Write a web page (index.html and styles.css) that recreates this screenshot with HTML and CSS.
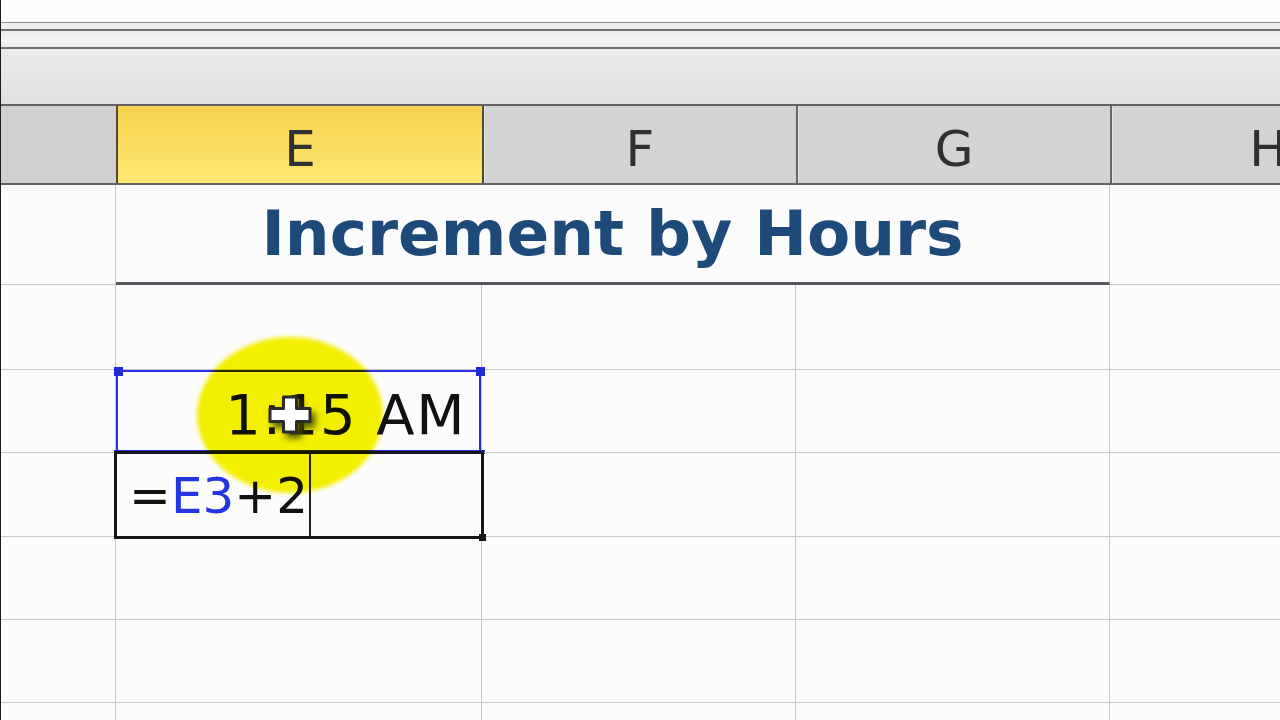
FILE: index.html
```html
<!DOCTYPE html>
<html lang="en">
<head>
  <meta charset="UTF-8">
  <title>Increment by Hours</title>
  <link rel="stylesheet" href="styles.css">
</head>
<body>

<div class="window">
  <!-- what is left of the ribbon above the sheet -->
  <div class="ribbon">
    <div class="ribbon-gap"></div>
    <div class="ribbon-line thin"></div>
    <div class="ribbon-strip"></div>
    <div class="ribbon-line"></div>
    <div class="ribbon-strip tall"></div>
    <div class="ribbon-line"></div>
    <div class="ribbon-base"></div>
  </div>

  <div class="col-heads">
    <div class="col-head corner"></div>
    <div class="col-head current">E</div>
    <div class="col-head">F</div>
    <div class="col-head">G</div>
    <div class="col-head">H</div>
  </div>

  <div class="sheet">
    <div class="cell"></div>
    <div class="cell title">Increment by Hours</div>
    <div class="cell"></div>

    <div class="cell"></div><div class="cell"></div><div class="cell"></div><div class="cell"></div><div class="cell"></div>

    <div class="cell"></div>
    <div class="cell value sel">
      1:15 AM
      <span class="handle tl"></span>
      <span class="handle tr"></span>
      <span class="handle bl"></span>
      <span class="handle br"></span>
    </div>
    <div class="cell"></div><div class="cell"></div><div class="cell"></div>

    <div class="cell"></div>
    <div class="cell formula active">
      <span class="formula-text">=<span class="ref">E3</span>+2</span>
      <span class="caret"></span>
      <span class="fill-handle"></span>
    </div>
    <div class="cell"></div><div class="cell"></div><div class="cell"></div>

    <div class="cell"></div><div class="cell"></div><div class="cell"></div><div class="cell"></div><div class="cell"></div>
    <div class="cell"></div><div class="cell"></div><div class="cell"></div><div class="cell"></div><div class="cell"></div>
    <div class="cell"></div><div class="cell"></div><div class="cell"></div><div class="cell"></div><div class="cell"></div>

    <!-- screen recorder click highlight + mouse pointer -->
    <div class="spotlight"></div>
    <svg class="pointer" width="56" height="52" viewBox="0 0 56 52">
      <path d="M19.5 7 H32.5 V18.5 H46 V31.5 H32.5 V42 H19.5 V31.5 H6 V18.5 H19.5 Z" fill="#fff" stroke="#2b2b2b" stroke-width="3" stroke-linejoin="round"/>
    </svg>
  </div>
</div>

</body>
</html>
```

FILE: styles.css
```css
body {
  margin: 0;
  background: #fcfcfc;
  font-family: "DejaVu Sans", Verdana, sans-serif;
  overflow: hidden;
}
.window {
  position: relative;
  width: 1280px;
  height: 720px;
  overflow: hidden;
  background: #fcfcfc;
}
.window::after {
  content: "";
  position: absolute;
  top: 0; bottom: 0; left: 0;
  width: 1px;
  background: #1c1c1c;
}

/* ribbon remains */
.ribbon-gap {
  height: 22px;
  background: #fdfdfd;
}
.ribbon-line {
  height: 2px;
  background: #727272;
}
.ribbon-line.thin {
  height: 1px;
  background: #8e8e8e;
}
.ribbon-strip {
  height: 6px;
  background: #efefef;
}
.ribbon-strip.tall {
  height: 16px;
  background: linear-gradient(#ececec, #f2f2f2 60%, #e9e9e9);
}
.ribbon-base {
  height: 55px;
  background: linear-gradient(#ebebeb, #e0e0e0);
}

/* column headers */
.col-heads {
  display: grid;
  grid-template-columns: 116px 366px 314px 314px 314px;
  height: 81px;
  border-top: 2px solid #626262;
  border-bottom: 2px solid #626262;
  box-sizing: border-box;
  width: 1424px;
}
.col-head {
  display: flex;
  align-items: center;
  justify-content: center;
  padding-top: 8px;
  box-sizing: border-box;
  font-size: 50px;
  color: #303030;
  background: #d3d3d3;
  border-left: 2px solid #666;
  box-shadow: inset 1px 0 #e4e4e4;
}
.col-head.corner {
  border-left: none;
  box-shadow: none;
  background: #d0d0d0;
}
.col-head.current {
  background: linear-gradient(#f9d250, #fde872);
  border-left: 2px solid #4e4b38;
  border-right: 2px solid #4e4b38;
  box-shadow: none;
  margin-right: -2px;
  position: relative;
  z-index: 1;
}

/* grid body */
.sheet {
  position: relative;
  display: grid;
  grid-template-columns: 116px 366px 314px 314px 314px;
  grid-template-rows: 100px 85px 83px 84px 83px 83px 83px;
  width: 1424px;
}
.cell {
  border-right: 1px solid #c8c8c8;
  border-bottom: 1px solid #c8c8c8;
  box-sizing: border-box;
  position: relative;
}
.cell.title {
  grid-column: span 3;
  border-bottom: 3px solid #55585e;
  display: flex;
  align-items: center;
  justify-content: center;
  font-weight: bold;
  font-size: 63px;
  color: #1e4a7a;
}
.cell.value {
  display: flex;
  align-items: center;
  justify-content: flex-end;
  padding: 6px 15px 0 0;
  font-size: 56px;
  letter-spacing: 1.5px;
  color: #111;
}
.cell.sel {
  box-shadow: inset 0 0 0 2px #2a2ee0;
}
.handle {
  position: absolute;
  width: 9px;
  height: 9px;
  background: #1f2bd6;
}
.handle.tl { top: -3px; left: -2px; }
.handle.tr { top: -3px; right: -4px; }
.handle.bl { bottom: -2px; left: -2px; height: 4px; }
.handle.br { bottom: -2px; right: -4px; height: 4px; }

.cell.formula {
  display: flex;
  align-items: stretch;
  padding-left: 13px;
  font-size: 50px;
  color: #111;
}
.cell.active {
  outline: 3px solid #151515;
  outline-offset: -1px;
  z-index: 1;
}
.formula-text {
  display: flex;
  align-items: center;
  padding-top: 2px;
}
.formula-text .ref {
  color: #2436e0;
}
.caret {
  width: 2px;
  margin-left: 1px;
  background: #222;
}
.fill-handle {
  position: absolute;
  right: -5px;
  bottom: -5px;
  width: 7px;
  height: 7px;
  background: #151515;
}

/* overlays */
.spotlight {
  position: absolute;
  left: 197px;
  top: 152px;
  width: 186px;
  height: 156px;
  border-radius: 50%;
  background: #f6f200;
  mix-blend-mode: multiply;
  filter: blur(2px);
  z-index: 2;
}
.pointer {
  position: absolute;
  left: 264px;
  top: 205px;
  z-index: 3;
  filter: drop-shadow(4px 5px 3px rgba(70, 70, 0, 0.85));
}
```
